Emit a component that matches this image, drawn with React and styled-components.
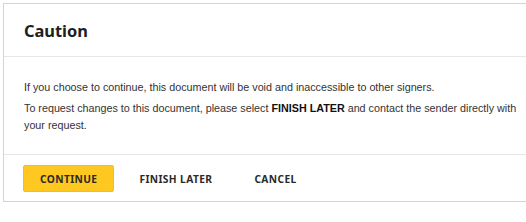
import styled, { createGlobalStyle } from 'styled-components';

const GlobalStyle = createGlobalStyle`
  html, body {
    margin: 0;
    padding: 0;
    background: #ffffff;
  }
`;

const Page = styled.div`
  width: 526px;
  height: 222px;
  padding: 3px 0 0 3px;
  box-sizing: border-box;
  overflow: hidden;
`;

const Dialog = styled.div`
  width: 530px;
  border: 1px solid #d4d4d4;
  border-right: none;
  background: #fff;
  box-sizing: border-box;
`;

const Header = styled.div`
  height: 52px;
  display: flex;
  align-items: center;
  padding: 0 20px;
  border-bottom: 1px solid #e6e6e6;
`;

const Title = styled.h2`
  margin: 0;
  font-family: "Noto Sans", sans-serif;
  font-size: 16.4px;
  font-weight: 700;
  color: #1e1e1e;
`;

const Body = styled.div`
  padding: 22px 8px 20px 20px;
  border-bottom: 1px solid #e6e6e6;
`;

const Text = styled.p`
  margin: 0 0 4px;
  font-family: "Liberation Sans", Arial, sans-serif;
  font-size: 10.75px;
  line-height: 17px;
  color: #333;

  &:last-child {
    margin-bottom: 0;
  }

  strong {
    color: #111;
  }
`;

const Footer = styled.div`
  display: flex;
  gap: 8px;
  padding: 10px 20px 9px 19px;
`;

const Button = styled.button`
  height: 27px;
  padding: 0 16px;
  border: 1px solid ${(p) => (p.$primary ? '#f6bf16' : 'transparent')};
  border-radius: 2px;
  background: ${(p) => (p.$primary ? '#ffc820' : 'transparent')};
  font-family: "Noto Sans", sans-serif;
  font-size: 10.2px;
  font-weight: 700;
  letter-spacing: 0.4px;
  color: #2a2a2a;
  cursor: pointer;
`;

export default function App() {
  return (
    <Page>
      <GlobalStyle />
      <Dialog>
        <Header>
          <Title>Caution</Title>
        </Header>
        <Body>
          <Text>
            If you choose to continue, this document will be void and inaccessible to other signers.
          </Text>
          <Text>
            To request changes to this document, please select <strong>FINISH LATER</strong> and contact the sender directly with your request.
          </Text>
        </Body>
        <Footer>
          <Button $primary>CONTINUE</Button>
          <Button>FINISH LATER</Button>
          <Button>CANCEL</Button>
        </Footer>
      </Dialog>
    </Page>
  );
}
